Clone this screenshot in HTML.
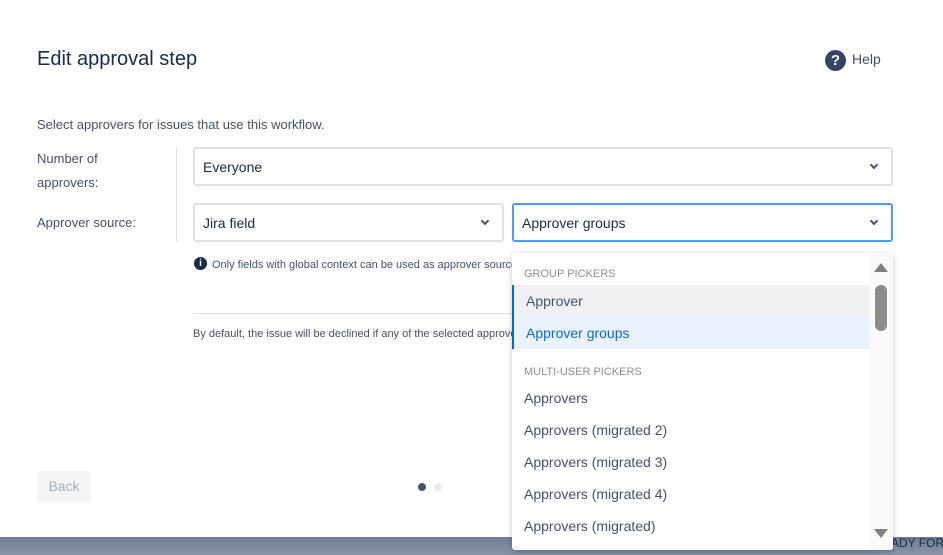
<!DOCTYPE html>
<html><head><meta charset="utf-8"><style>
*{margin:0;padding:0;box-sizing:border-box}
body{width:943px;height:555px;overflow:hidden;background:#fff;font-family:"Liberation Sans",sans-serif;color:#42526e;position:relative}
.a{position:absolute}
.band{left:0;top:537px;width:943px;height:18px;background:linear-gradient(#6f7c93,#8894a6)}
h1{position:absolute;left:37px;top:48px;font-size:20px;font-weight:normal;color:#172b4d}
.sel{position:absolute;border:2px solid #dfe1e6;border-radius:3px;height:39px;font-size:14px;color:#172b4d;padding:10px 8px}
.chev{position:absolute;right:14px;top:13px;width:6px;height:6px;border-right:2px solid #42526e;border-bottom:2px solid #42526e;transform:rotate(45deg)}
.lbl{font-size:14px;color:#42526e;line-height:24px}
.dd{left:512px;top:253px;width:381px;height:297px;background:#fff;box-shadow:0 2px 6px rgba(9,30,66,.25);border-radius:3px;overflow:hidden}
.hd{position:absolute;left:12px;font-size:11px;color:#8a8f99}
.it{position:absolute;left:0;width:358px;height:32px;font-size:14px;color:#42526e;padding:8px 12px}
</style></head><body>
<h1>Edit approval step</h1>
<div class="a" style="left:825px;top:50px;width:21px;height:21px;border-radius:50%;background:#344563;color:#fff;font-weight:bold;font-size:15px;text-align:center;line-height:21px">?</div>
<div class="a" style="left:852px;top:51px;font-size:14px;color:#42526e">Help</div>
<div class="a lbl" style="left:37px;top:113px;font-size:13px">Select approvers for issues that use this workflow.</div>
<div class="a lbl" style="left:37px;top:147px;font-size:13px">Number of<br>approvers:</div>
<div class="a lbl" style="left:37px;top:211px;font-size:13px">Approver source:</div>
<div class="a" style="left:176px;top:147px;width:1px;height:95px;background:#dfe1e6"></div>
<div class="sel" style="left:193px;top:147px;width:700px">Everyone<span class="chev"></span></div>
<div class="sel" style="left:193px;top:203px;width:311px">Jira field<span class="chev"></span></div>
<div class="sel" style="left:512px;top:203px;width:381px;border-color:#4c9aff">Approver groups<span class="chev"></span></div>
<div class="a" style="left:194px;top:257px;width:13px;height:13px;border-radius:50%;background:#172b4d;color:#fff;font-size:10px;font-weight:bold;text-align:center;line-height:13px">i</div>
<div class="a" style="left:212px;top:259px;font-size:11px;color:#42526e">Only fields with global context can be used as approver source</div>
<div class="a" style="left:193px;top:313px;width:320px;height:1px;background:#dfe1e6"></div>
<div class="a" style="left:193px;top:328px;font-size:11px;color:#42526e">By default, the issue will be declined if any of the selected approve</div>
<div class="a" style="left:37px;top:471px;width:54px;height:31px;background:#f4f5f7;border-radius:3px;color:#a5adba;font-size:14px;text-align:center;line-height:31px">Back</div>
<div class="a" style="left:418px;top:483px;width:8px;height:8px;border-radius:50%;background:#42526e"></div>
<div class="a" style="left:434px;top:483px;width:8px;height:8px;border-radius:50%;background:#ebecf0"></div>
<div class="a band"></div>
<div class="a" style="left:891px;top:536px;font-size:12px;color:#172b4d;white-space:nowrap">ADY FOR I</div>
<div class="a dd">
 <div class="hd" style="top:15px">GROUP PICKERS</div>
 <div class="it" style="top:32px;background:#f0f1f3;border-left:2px solid #0065ff">Approver</div>
 <div class="it" style="top:64px;background:#e9f2fe;border-left:2px solid #0065ff;color:#0c66e4">Approver groups</div>
 <div class="hd" style="top:113px">MULTI-USER PICKERS</div>
 <div class="it" style="top:129px">Approvers</div>
 <div class="it" style="top:161px">Approvers (migrated 2)</div>
 <div class="it" style="top:193px">Approvers (migrated 3)</div>
 <div class="it" style="top:225px">Approvers (migrated 4)</div>
 <div class="it" style="top:257px">Approvers (migrated)</div>
 <div class="a" style="left:358px;top:0;width:23px;height:297px;background:#fafafa"></div>
 <div class="a" style="left:362px;top:10px;width:0;height:0;border-left:7px solid transparent;border-right:7px solid transparent;border-bottom:9px solid #808080"></div>
 <div class="a" style="left:363px;top:32px;width:12px;height:46px;border-radius:6px;background:#8c8c8c"></div>
 <div class="a" style="left:362px;top:276px;width:0;height:0;border-left:7px solid transparent;border-right:7px solid transparent;border-top:9px solid #808080"></div>
</div>
</body></html>
